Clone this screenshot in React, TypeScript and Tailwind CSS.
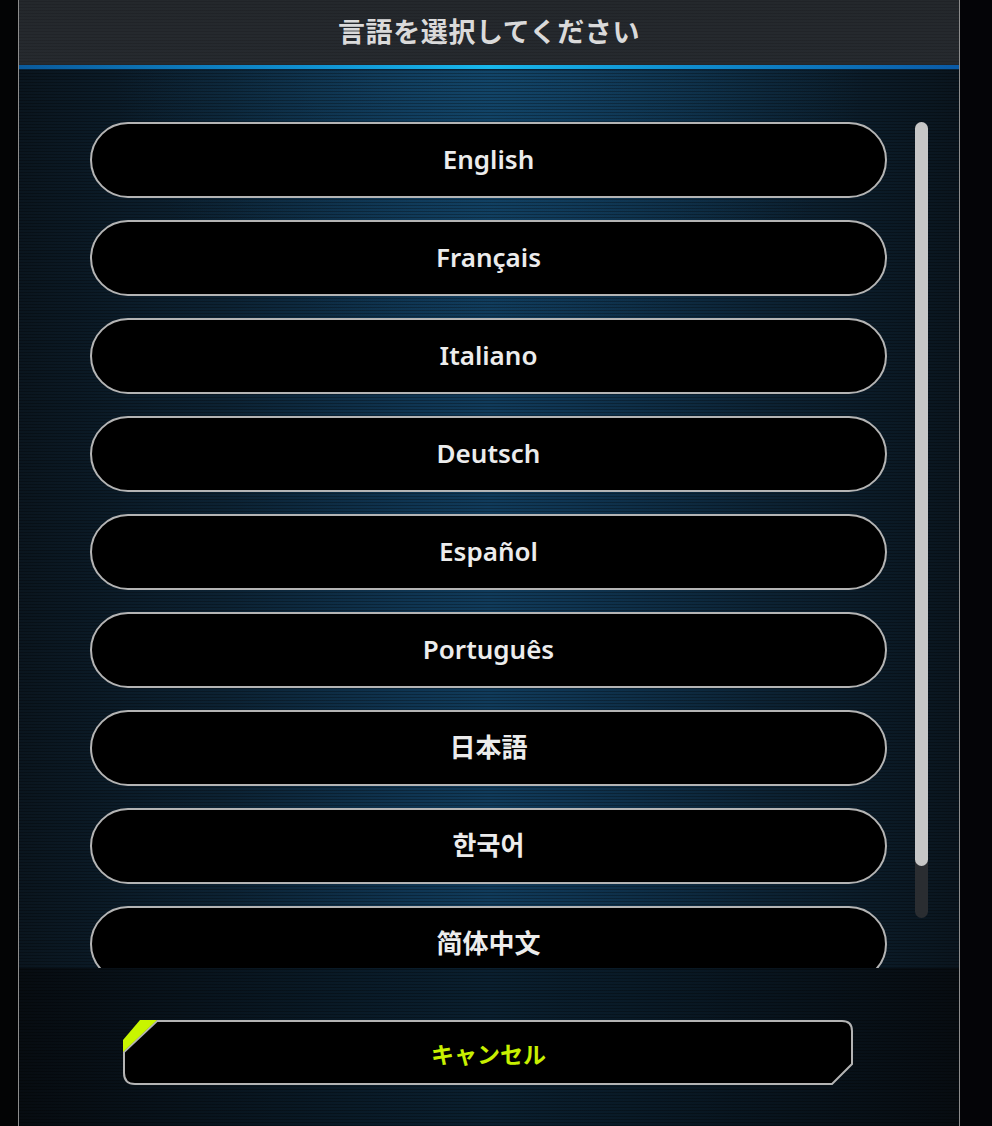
import React from "react";

const languages: { label: string }[] = [
  { label: "English" },
  { label: "Français" },
  { label: "Italiano" },
  { label: "Deutsch" },
  { label: "Español" },
  { label: "Português" },
  { label: "日本語" },
  { label: "한국어" },
  { label: "简体中文" },
];

function LangButton({ label }: { label: string }) {
  const isZh = label === "简体中文";
  const isKo = label === "한국어";
  return (
    <div
      className={
        "shrink-0 h-[76px] w-[797px] rounded-full border-2 border-[#b4b4b4] bg-black flex items-center justify-center text-[26px] font-semibold text-[#ececec] leading-none pb-[2px] " +
        (isZh
          ? "[font-family:'Noto_Sans','Noto_Sans_CJK_SC',sans-serif]"
          : isKo
          ? "[font-family:'Noto_Sans','Noto_Sans_CJK_KR',sans-serif]"
          : "[font-family:'Noto_Sans','Noto_Sans_CJK_JP',sans-serif]")
      }
    >
      {label}
    </div>
  );
}

function CancelButton() {
  return (
    <div className="relative w-[731px] h-[66px] flex items-center justify-center">
      <svg
        className="absolute inset-0"
        width="731"
        height="66"
        viewBox="0 0 731 66"
      >
        <path
          d="M34 1 H719 Q729 1 729 11 V44 L709 64 H12 Q1 64 1 53 V32 Z"
          fill="#000"
          stroke="#b4b4b4"
          strokeWidth="2"
        />
        <polygon points="17,0 34,0 0,32 0,20" fill="#c8f500" />
      </svg>
      <span className="relative text-[23px] font-bold text-[#c8f000] leading-none [font-family:'Noto_Sans_CJK_JP',sans-serif]">
        キャンセル
      </span>
    </div>
  );
}

export default function App() {
  return (
    <div className="w-[992px] h-[1126px] bg-black flex overflow-hidden [font-family:'Noto_Sans','Noto_Sans_CJK_JP',sans-serif]">
      <div className="w-[18px] shrink-0 bg-[#030405]" />
      <div className="w-[942px] shrink-0 flex flex-col border-x border-[#8c8c8c]">
        {/* Header */}
        <div className="h-[65px] shrink-0 flex items-center justify-center [background-image:repeating-linear-gradient(0deg,rgba(0,0,0,0.12)_0px,rgba(0,0,0,0.12)_1px,transparent_1px,transparent_3px),linear-gradient(180deg,#24282c,#262a2f)]">
          <span className="text-[27px] font-bold text-[#dadada] leading-none tracking-[0.6px] [font-family:'Noto_Sans_CJK_JP',sans-serif] pb-[4px]">
            言語を選択してください
          </span>
        </div>
        {/* Blue line */}
        <div className="h-[4px] shrink-0 [background-image:linear-gradient(90deg,#0a5a9c_0%,#0f8fd0_30%,#18b8ec_50%,#0f8fd0_70%,#0a5aa6_100%)]" />
        <div className="h-[1px] shrink-0 bg-[#08243a]" />
        {/* List area */}
        <div className="h-[898px] shrink-0 flex overflow-hidden [background-image:repeating-linear-gradient(0deg,rgba(0,0,0,0.28)_0px,rgba(0,0,0,0.28)_1px,transparent_1px,transparent_3px),radial-gradient(ellipse_40%_30%_at_50%_0%,rgba(20,80,120,0.45),transparent),linear-gradient(90deg,#0a151e_0%,#0c2233_22%,#0f3552_42%,#103b5b_50%,#0f3552_58%,#0c2233_80%,#0a151e_100%)]">
          <div className="ml-[71px] w-[797px] shrink-0 flex flex-col gap-[22px] pt-[52px]">
            {languages.map((l) => (
              <LangButton key={l.label} label={l.label} />
            ))}
          </div>
          <div className="ml-[28px] mt-[52px] w-[13px] h-[796px] shrink-0 rounded-full bg-[#2a2d31] flex flex-col">
            <div className="h-[744px] w-full rounded-full bg-[#c6c6c6]" />
          </div>
        </div>
        {/* Bottom area */}
        <div className="flex-1 pt-[52px] pl-[104px] [background-image:repeating-linear-gradient(0deg,rgba(0,0,0,0.28)_0px,rgba(0,0,0,0.28)_1px,transparent_1px,transparent_3px),linear-gradient(90deg,#070c11_0%,#091a27_35%,#0a1f2f_50%,#091a27_65%,#070c11_100%)]">
          <CancelButton />
        </div>
      </div>
      <div className="flex-1 bg-[#040407]" />
    </div>
  );
}
